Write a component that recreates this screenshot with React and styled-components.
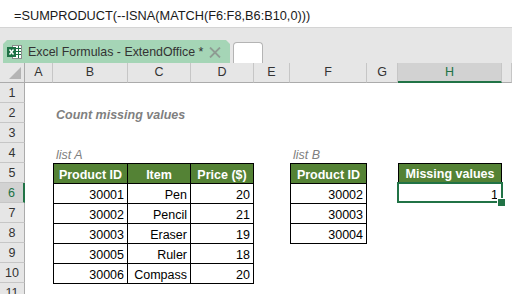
import React from 'react';
import styled, { createGlobalStyle } from 'styled-components';

const GREEN = '#548235';
const SEL = '#217346';
const FONT = '"Liberation Sans", Arial, sans-serif';

const GlobalStyle = createGlobalStyle`
  html, body { margin: 0; padding: 0; background: #fff; }
  body { font-family: ${FONT}; }
  * { box-sizing: border-box; }
`;

const Window = styled.div`
  width: 512px;
  height: 294px;
  overflow: hidden;
  display: flex;
  flex-direction: column;
  background: #e6e6e6;
`;

const FormulaBar = styled.div`
  flex: none;
  height: 28px;
  background: #fff;
  border-bottom: 1px solid #d4d4d4;
  padding: 8px 0 0 14px;
  font-size: 12.75px;
  line-height: 16px;
  color: #1a1a1a;
  white-space: nowrap;
`;

const TabStrip = styled.div`
  flex: none;
  height: 35px;
  display: flex;
  align-items: flex-end;
  gap: 3px;
  padding-left: 3px;
`;

const ActiveTab = styled.div`
  width: 227px;
  height: 23px;
  background: #a5d5b6;
  clip-path: polygon(0 100%, 0 4px, 4px 0, calc(100% - 4px) 0, 100% 4px, 100% 100%);
  display: flex;
  align-items: center;
  padding: 1px 0 0 4px;
  gap: 5px;
  font-size: 12.4px;
  color: #333;
  white-space: nowrap;
`;

const TabLabel = styled.span`
  line-height: 16px;
`;

const NewTab = styled.div`
  width: 30px;
  height: 21px;
  background: #fff;
  border: 1px solid #b4b4b4;
  border-bottom: none;
  border-radius: 4px 4px 0 0;
`;

const Sheet = styled.div`
  flex: none;
  height: 231px;
  display: grid;
  grid-template-columns: 25px 28px 75px 63px 63px 36px 77px 31px 104px 1fr;
  grid-template-rows: repeat(12, 20px);
  background: #fff;
  font-size: 12.5px;
`;

const Corner = styled.div`
  grid-column: 1;
  grid-row: 1;
  background: #e6e6e6;
  border-right: 1px solid #ababab;
  border-bottom: 1px solid #ababab;
  display: flex;
  align-items: flex-end;
  justify-content: flex-end;
  padding: 0 3px 3px 0;
`;

const ColHeader = styled.div`
  grid-column: ${(p) => p.$col};
  grid-row: 1;
  background: ${(p) => (p.$active ? '#d2d2d2' : '#e6e6e6')};
  border-right: 1px solid #c6c6c6;
  border-bottom: ${(p) => (p.$active ? `2px solid ${SEL}` : '1px solid #ababab')};
  color: ${(p) => (p.$active ? SEL : '#333')};
  text-align: center;
  line-height: 19px;
`;

const RowHeader = styled.div`
  grid-column: 1;
  grid-row: ${(p) => p.$row};
  background: ${(p) => (p.$active ? '#d2d2d2' : '#e6e6e6')};
  border-bottom: 1px solid #c6c6c6;
  border-right: ${(p) => (p.$active ? `2px solid ${SEL}` : '1px solid #ababab')};
  color: ${(p) => (p.$active ? SEL : '#333')};
  text-align: center;
  line-height: 20px;
`;

const Label = styled.div`
  grid-column: ${(p) => p.$col} / span ${(p) => p.$span || 1};
  grid-row: ${(p) => p.$row};
  align-self: end;
  padding-left: 3px;
  line-height: 16px;
  font-style: italic;
  font-weight: ${(p) => (p.$bold ? 700 : 400)};
  color: #7f7f7f;
  white-space: nowrap;
`;

const DataTable = styled.table`
  grid-column: ${(p) => p.$col} / span ${(p) => p.$span || 1};
  grid-row: ${(p) => p.$row} / span ${(p) => p.$rows};
  align-self: start;
  border-spacing: 0;
  table-layout: fixed;
  width: ${(p) => p.$width}px;
  border-top: 1px solid #000;
  border-left: 1px solid #000;
  font-size: 12.5px;
  tr { height: 20px; }
`;

const Th = styled.th`
  background: ${GREEN};
  color: #fff;
  font-weight: 700;
  text-align: center;
  vertical-align: bottom;
  line-height: 16px;
  padding: 0;
  border-right: 1px solid #000;
  border-bottom: 1px solid #000;
  white-space: nowrap;
`;

const Td = styled.td`
  text-align: right;
  vertical-align: bottom;
  line-height: 16px;
  padding: 0 3px 0 0;
  border-right: 1px solid #000;
  border-bottom: 1px solid #000;
  color: #000;
  white-space: nowrap;
`;

const ResultTable = styled.table`
  grid-column: 9;
  grid-row: 6 / span 2;
  align-self: start;
  border-spacing: 0;
  table-layout: fixed;
  width: 104px;
  font-size: 12.5px;
  tr { height: 20px; }
  ${Th} { border: 1px solid #000; height: 20px; }
`;

const SelectedCell = styled.td`
  position: relative;
  text-align: right;
  vertical-align: bottom;
  line-height: 16px;
  padding: 0 4px 0 0;
  color: #000;
  &::after {
    content: '';
    position: absolute;
    inset: -1px -1px 0 -1px;
    border: 2px solid ${SEL};
  }
  &::before {
    content: '';
    position: absolute;
    right: -4px;
    bottom: -4px;
    width: 7px;
    height: 7px;
    background: ${SEL};
    border: 1px solid #fff;
    z-index: 1;
  }
`;

const ExcelIcon = () => (
  <svg width="16" height="16" viewBox="0 0 16 16">
    <rect x="5.5" y="1.5" width="9" height="13" fill="#fff" stroke="#8c8c8c" />
    <path d="M9 4.5h5M9 7.5h5M9 10.5h5M11.5 2v12" stroke="#1e7145" strokeWidth="1" />
    <rect x="0" y="3" width="9" height="10" fill="#1e7145" />
    <path d="M2.5 5.5l4 5M6.5 5.5l-4 5" stroke="#fff" strokeWidth="1.4" />
  </svg>
);

const CloseIcon = () => (
  <svg width="12" height="11" viewBox="0 0 12 11" style={{ marginLeft: 1 }}>
    <path d="M1 0.5l10 10M11 0.5l-10 10" stroke="#8e9c93" strokeWidth="1.8" />
  </svg>
);

const cols = ['A', 'B', 'C', 'D', 'E', 'F', 'G', 'H', ''];
const listA = [
  ['30001', 'Pen', '20'],
  ['30002', 'Pencil', '21'],
  ['30003', 'Eraser', '19'],
  ['30005', 'Ruler', '18'],
  ['30006', 'Compass', '20'],
];
const listB = ['30002', '30003', '30004'];

export default function App() {
  return (
    <>
      <GlobalStyle />
      <Window>
        <FormulaBar>=SUMPRODUCT(--ISNA(MATCH(F6:F8,B6:B10,0)))</FormulaBar>
        <TabStrip>
          <ActiveTab>
            <ExcelIcon />
            <TabLabel>Excel Formulas - ExtendOffice *</TabLabel>
            <CloseIcon />
          </ActiveTab>
          <NewTab />
        </TabStrip>
        <Sheet>
          <Corner>
            <svg width="12" height="12" viewBox="0 0 12 12">
              <polygon points="12,0 12,12 0,12" fill="#b4b4b4" />
            </svg>
          </Corner>
          {cols.map((c, i) => (
            <ColHeader key={i} $col={i + 2} $active={c === 'H'}>
              {c}
            </ColHeader>
          ))}
          {Array.from({ length: 11 }, (_, i) => (
            <RowHeader key={i} $row={i + 2} $active={i + 1 === 6}>
              {i + 1}
            </RowHeader>
          ))}
          <Label $col={3} $span={4} $row={3} $bold>
            Count missing values
          </Label>
          <Label $col={3} $row={5}>list A</Label>
          <Label $col={7} $row={5}>list B</Label>

          <DataTable $col={3} $span={3} $row={6} $rows={6} $width={201}>
            <colgroup>
              <col style={{ width: 74 }} />
              <col style={{ width: 63 }} />
              <col style={{ width: 63 }} />
            </colgroup>
            <thead>
              <tr>
                <Th>Product ID</Th>
                <Th>Item</Th>
                <Th>Price ($)</Th>
              </tr>
            </thead>
            <tbody>
              {listA.map((r) => (
                <tr key={r[0]}>
                  {r.map((v, j) => (
                    <Td key={j}>{v}</Td>
                  ))}
                </tr>
              ))}
            </tbody>
          </DataTable>

          <DataTable $col={7} $row={6} $rows={4} $width={77}>
            <thead>
              <tr>
                <Th>Product ID</Th>
              </tr>
            </thead>
            <tbody>
              {listB.map((v) => (
                <tr key={v}>
                  <Td>{v}</Td>
                </tr>
              ))}
            </tbody>
          </DataTable>

          <ResultTable>
            <thead>
              <tr>
                <Th>Missing values</Th>
              </tr>
            </thead>
            <tbody>
              <tr>
                <SelectedCell>1</SelectedCell>
              </tr>
            </tbody>
          </ResultTable>
        </Sheet>
      </Window>
    </>
  );
}
